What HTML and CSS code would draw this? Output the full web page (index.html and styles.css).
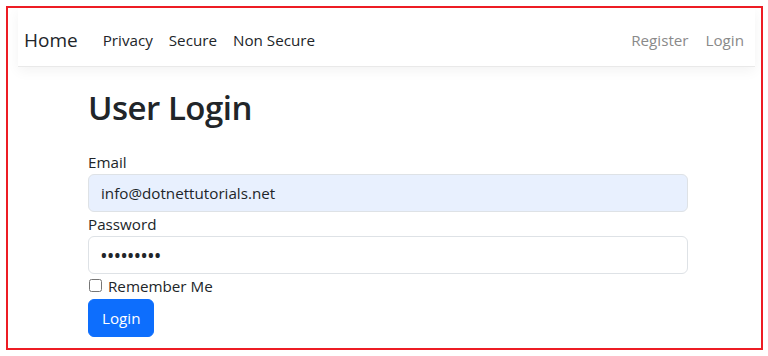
FILE: index.html
```html
<!DOCTYPE html>
<html lang="en">
<head>
<meta charset="utf-8">
<title>User Login</title>
<link rel="stylesheet" href="styles.css">
</head>
<body>
<div class="frame">
  <header class="navbar">
    <a class="brand" href="#">Home</a>
    <nav class="nav-main">
      <a href="#">Privacy</a>
      <a href="#">Secure</a>
      <a href="#">Non Secure</a>
    </nav>
    <nav class="nav-user">
      <a href="#">Register</a>
      <a href="#">Login</a>
    </nav>
  </header>
  <main class="content">
    <h1 class="title">User Login</h1>
    <form class="form">
      <label class="label" for="email">Email</label>
      <input class="input autofill" id="email" type="text" value="info@dotnettutorials.net">
      <label class="label" for="pw">Password</label>
      <input class="input password" id="pw" type="password" value="123456789">
      <div class="check">
        <input type="checkbox" id="rem" class="checkbox">
        <label for="rem">Remember Me</label>
      </div>
      <button class="btn" type="button">Login</button>
    </form>
  </main>
</div>
</body>
</html>
```
FILE: styles.css
```css
* { box-sizing: border-box; }
html, body { margin: 0; padding: 0; background: #fff; }
body {
  padding: 6px 5px 6px 6px;
  font-family: "Open Sans", "Noto Sans", sans-serif;
  color: #212529;
}
.frame {
  border: 2px solid #ed1c24;
  height: 344px;
  overflow: hidden;
}
.navbar {
  display: flex;
  align-items: center;
  height: 59px;
  margin: 0 6px 0 10px;
  padding: 5px 11px 0 6px;
  background: #fff;
  border-bottom: 1px solid #e9e9e9;
  box-shadow: 0 4px 12px rgba(0,0,0,.05);
}
.navbar a { text-decoration: none; }
.brand {
  font-size: 19px;
  color: #212529;
  margin-right: 25px;
}
.nav-main { display: flex; gap: 16px; font-size: 15.2px; }
.nav-main a { color: #212529; }
.nav-user { display: flex; gap: 17px; margin-left: auto; font-size: 15.2px; }
.nav-user a { color: #8a8a8a; }
.content {
  margin-left: 80px;
  width: 600px;
  padding-top: 21px;
}
.title {
  margin: 0 0 22px;
  font-size: 33px;
  letter-spacing: -0.5px;
  font-weight: 600;
  line-height: 1.2;
}
.form { display: flex; flex-direction: column; align-items: flex-start; }
.label { font-size: 15.2px; line-height: 24px; }
.input {
  width: 600px;
  height: 38px;
  padding: 6px 12px;
  font: inherit;
  font-size: 15.2px;
  color: #212529;
  border: 1px solid #dee2e6;
  border-radius: 6px;
  background: #fff;
}
.input.autofill { background: #e8f0fe; }
.input.password { letter-spacing: 1px; font-weight: 700; }
.check { display: flex; align-items: center; gap: 6px; font-size: 15.2px; line-height: 24px; }
.checkbox { margin: 0 0 0 1px; width: 13px; height: 13px; }
.btn {
  margin-top: 1px;
  height: 38px;
  padding: 6px 13px;
  font: inherit;
  font-size: 15.2px;
  color: #fff;
  background: #0d6efd;
  border: 1px solid #0d6efd;
  border-radius: 6px;
}
```
